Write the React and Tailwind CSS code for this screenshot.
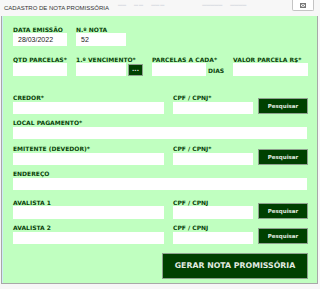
const label =
  "block h-[7px] leading-[7px] text-[6px] font-bold text-[#0a3f0a] whitespace-nowrap font-['DejaVu_Sans',sans-serif]";
const darkBtn =
  "bg-[#004000] border border-[#8fa08f] text-[#e2ebe2] font-bold flex items-center justify-center font-['DejaVu_Sans',sans-serif]";

function Field({ text, w, h = 12, gap = 1, value, className = "" }) {
  return (
    <div className={"flex flex-col " + className} style={{ width: w }}>
      <span className={label}>{text}</span>
      <div
        className="bg-white text-[7px] leading-none text-[#222] flex items-center pl-[5px]"
        style={{ height: h, marginTop: gap }}
      >
        {value}
      </div>
    </div>
  );
}

function Pesquisar() {
  return (
    <button className={darkBtn + " w-[50px] h-[16px] ml-[5px] text-[5.5px]"}>Pesquisar</button>
  );
}

export default function App() {
  return (
    <div className="w-[320px] h-[289px] bg-[#f7f7f7] overflow-hidden relative font-['Liberation_Sans',Arial,sans-serif]">
      {/* title bar */}
      <div className="h-[16px] flex items-center pl-[4px] text-[6px] text-[#333] relative">
        CADASTRO DE NOTA PROMISSÓRIA
        <div className="absolute left-[118px] top-[2px] flex gap-[8px] text-[4px] text-[#dde0e5]">
          <span>▬▬</span><span>▬ ▬</span><span>▬▬ ▬</span><span className="ml-[30px]">▬▬▬▬▬</span><span>▬▬▬▬</span>
        </div>
      </div>
      <div className="absolute right-[6px] top-0 w-[22px] h-[11px] bg-white border border-t-0 border-[#c4c4c4] rounded-b-[2px] flex items-center justify-center">
        <svg width="6" height="5" viewBox="0 0 6 5">
          <rect x="0.5" y="0.5" width="5" height="4" fill="none" stroke="#777" strokeWidth="1" />
          <path d="M1 1 L5 4 M5 1 L1 4" stroke="#777" strokeWidth="0.8" />
        </svg>
      </div>

      {/* window */}
      <div className="ml-[1px] w-[317px] border border-t-0 border-[#a8a8a8]">
        <div className="h-[267px] bg-[#c0ffc0] border-l border-[#cfe9f7] pl-[10px] pr-[9px] pt-[10px]">
          {/* row 1 */}
          <div className="flex gap-[9px]">
            <Field text="DATA EMISSÃO" w={54} h={13} gap={0} value="28/03/2022" />
            <Field text="N.º NOTA" w={50} h={13} gap={0} value="52" />
          </div>
          {/* row 2 */}
          <div className="flex items-end mt-[10px]">
            <Field text="QTD PARCELAS*" w={54} h={13} gap={0} />
            <Field text="1.º VENCIMENTO*" w={50} h={13} gap={0} className="ml-[9px]" />
            <button className={darkBtn + " w-[15px] h-[12px] ml-[2px] text-[6px] leading-none pb-[2px]"}>...</button>
            <Field text="PARCELAS A CADA*" w={54} h={13} gap={0} className="ml-[9px]" />
            <span className="text-[6px] font-bold text-[#0a3f0a] ml-[2px] mb-[2px] leading-[7px] font-['DejaVu_Sans',sans-serif]">DIAS</span>
            <Field text="VALOR PARCELA R$*" w={75} h={13} gap={0} className="ml-auto" />
          </div>
          {/* credor */}
          <div className="flex items-end mt-[18px]">
            <Field text="CREDOR*" w={151} />
            <Field text="CPF / CPNJ*" w={80} className="ml-[9px]" />
            <Pesquisar />
          </div>
          {/* local */}
          <div className="mt-[5px]">
            <Field text="LOCAL PAGAMENTO*" w={294} />
          </div>
          {/* emitente */}
          <div className="flex items-end mt-[6px]">
            <Field text="EMITENTE (DEVEDOR)*" w={151} />
            <Field text="CPF / CPNJ*" w={80} className="ml-[9px]" />
            <Pesquisar />
          </div>
          {/* endereço */}
          <div className="mt-[5px]">
            <Field text="ENDEREÇO" w={294} />
          </div>
          {/* avalista 1 */}
          <div className="flex items-end mt-[9px]">
            <Field text="AVALISTA 1" w={151} h={13} gap={0} />
            <Field text="CPF / CPNJ" w={80} h={13} gap={0} className="ml-[9px]" />
            <Pesquisar />
          </div>
          {/* avalista 2 */}
          <div className="flex items-end mt-[5px]">
            <Field text="AVALISTA 2" w={151} />
            <Field text="CPF / CPNJ" w={80} className="ml-[9px]" />
            <Pesquisar />
          </div>
          {/* gerar */}
          <div className="flex justify-end mt-[9px]">
            <button className={darkBtn + " w-[146px] h-[26px] text-[7.8px]"}>
              GERAR NOTA PROMISSÓRIA
            </button>
          </div>
        </div>
      </div>
    </div>
  );
}
